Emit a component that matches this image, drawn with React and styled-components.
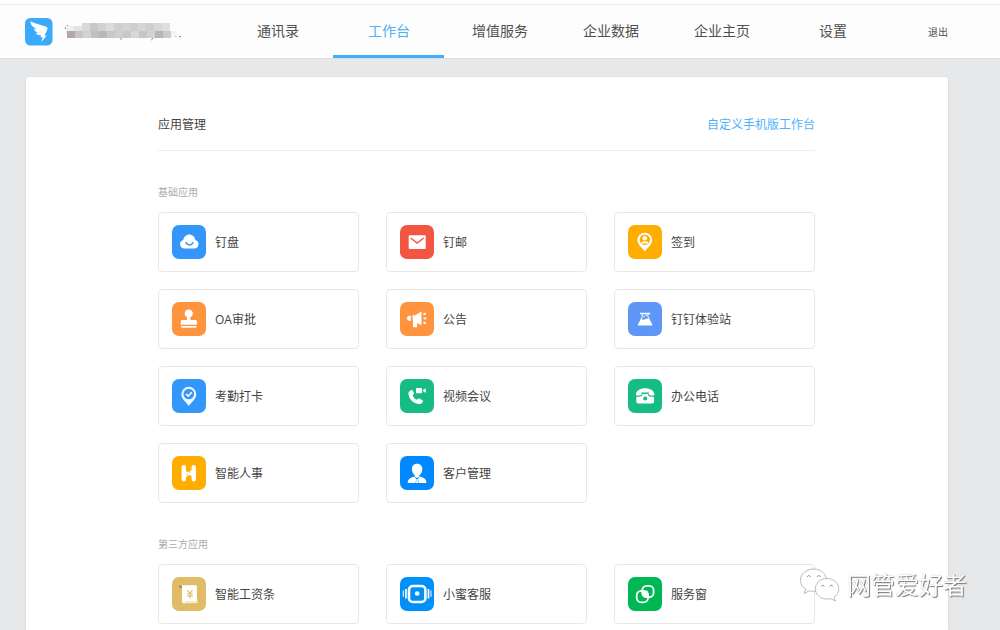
import React, { useState } from "react";
import styled, { createGlobalStyle } from "styled-components";

const GlobalStyle = createGlobalStyle`
  * {
    box-sizing: border-box;
  }

  body {
    margin: 0;
    background: #e7e8ea;
    color: #444;
    font-family: "Open Sans", "Noto Sans CJK SC", sans-serif;
    font-size: 12px;
    line-height: 18px;
  }
`;

const Page = styled.div`
  display: flex;
  flex-direction: column;
  min-height: 100vh;
`;

const Header = styled.header`
  display: flex;
  align-items: stretch;
  height: 59px;
  padding: 0 52px 0 25px;
  background: #fdfdfd;
  border-top: 4px solid #fff;
  border-bottom: 1px solid #dfe0e2;
  box-shadow: inset 0 1px 0 #ececec;
`;

const Brand = styled.div`
  display: flex;
  align-items: center;
  gap: 12px;
  flex: 0 0 197px;
  padding-top: 2px;
`;

const Nav = styled.nav`
  display: flex;
  flex: 1;
`;

const Tab = styled.a`
  display: flex;
  align-items: center;
  justify-content: center;
  flex: 0 1 111px;
  padding: 3px 0 0 1px;
  border-bottom: 3px solid ${(props) => (props.$active ? "#40adfb" : "transparent")};
  color: ${(props) => (props.$active ? "#4fb1fa" : "#505050")};
  font-size: 14px;
  text-decoration: none;
`;

const Logout = styled.button`
  padding: 2px 0 0;
  border: 0;
  background: none;
  color: #505050;
  font: inherit;
  font-size: 10px;
  cursor: pointer;
`;

const Panel = styled.main`
  flex: 1;
  margin: 18px 52px 0 26px;
  padding: 0 133px 0 132px;
  background: #fff;
  border-radius: 3px 3px 0 0;
  box-shadow: 0 0 2px rgba(0, 0, 0, 0.12);
`;

const PanelHead = styled.div`
  display: flex;
  align-items: flex-end;
  justify-content: space-between;
  height: 74px;
  padding-bottom: 16px;
  border-bottom: 1px solid #eee;
`;

const Title = styled.h1`
  margin: 0;
  font-size: 12px;
  font-weight: 400;
`;

const CustomLink = styled.a`
  color: #4fb1fa;
  text-decoration: none;
`;

const Section = styled.section`
  padding-top: 32px;
`;

const SectionTitle = styled.h2`
  margin: 0 0 11px;
  color: #aaa;
  font-size: 10px;
  font-weight: 400;
`;

const Grid = styled.div`
  display: grid;
  grid-template-columns: repeat(3, 1fr);
  gap: 17px 27px;
`;

const Card = styled.button`
  display: flex;
  align-items: center;
  gap: 9px;
  height: 60px;
  padding: 0 13px;
  border: 1px solid #e8e8e8;
  border-radius: 4px;
  background: #fff;
  color: #444;
  font: inherit;
  cursor: pointer;
`;

const AppName = styled.span`
  padding-top: 2px;
`;

const Tile = styled.svg`
  flex: none;
  width: 34px;
  height: 34px;
  border-radius: 7px;
  background: ${(props) => props.$color};
`;

const Watermark = styled.div`
  position: fixed;
  right: 33px;
  bottom: 26px;
  display: flex;
  align-items: center;
  gap: 6px;
  color: #fff;
  font-size: 24px;
  line-height: 36px;
  text-shadow: 1px 1px 1px #777, 0 0 1px #aaa;
  pointer-events: none;
`;

const icons = {
  disk: (c) => (
    <>
      <path
        d="M12.4 23.6a4.4 4.4 0 0 1-1.2-8.6c.7-3.2 3.2-5.5 6.1-5.5s5.4 2.3 6.1 5.5a4.4 4.4 0 0 1-1.2 8.6z"
        fill="#fff"
      />
      <path d="M14 17.6c1.6 3.1 5.4 3.1 7 0" fill="none" stroke={c} strokeWidth="1.5" strokeLinecap="round" />
    </>
  ),
  mail: (c) => (
    <>
      <rect x="8.7" y="10.2" width="17" height="13.8" rx="0.8" fill="#fff" />
      <path d="M10.7 13l6.5 5 6.5-5" fill="none" stroke={c} strokeWidth="1.4" />
    </>
  ),
  checkin: (c) => (
    <>
      <path d="M16.8 26.6c-2-3.2-7.4-6.7-7.4-11.5a7.4 7.4 0 0 1 14.8 0c0 4.8-5.4 8.3-7.4 11.5z" fill="#fff" />
      <circle cx="16.8" cy="14.7" r="5.2" fill={c} />
      <circle cx="16.8" cy="13.2" r="2.2" fill="#fff" />
      <path d="M12.8 18.6c.6-3.2 7.4-3.2 8 0z" fill="#fff" />
    </>
  ),
  stamp: () => (
    <path
      d="M16.7 7.5a4 4 0 0 0-2.1 7.4c.7.6.8 2 .2 3.1h-4.6c-1 0-1.5.6-1.5 1.5v3.3h16.2v-3.3c0-.9-.6-1.5-1.5-1.5h-4.7c-.6-1.1-.5-2.5.2-3.1a4 4 0 0 0-2.2-7.4zM9.2 24h15.2v.7c0 .7-.4 1.1-1 1.1H10.2c-.6 0-1-.4-1-1.1z"
      fill="#fff"
    />
  ),
  notice: () => (
    <>
      <path d="M12.4 13.5l3-.3 6.1-3.9v14l-4.3-2.4v3.7c0 .4-.3.7-.7.7h-2.8c-.4 0-.7-.3-.7-.7v-4.2z" fill="#fff" />
      <path d="M10.8 13.6v5.4c-2.4.1-3.8-.9-3.8-2.7s1.4-2.7 3.8-2.7z" fill="#fff" />
      <path d="M23.4 12.3l2.5-1M23.6 16.4h2.8M23.4 20.4l2.5 1" stroke="#fff" strokeWidth="1.8" />
    </>
  ),
  lab: () => (
    <>
      <path d="M12 11.5h10.2" stroke="#fff" strokeWidth="1.3" />
      <path d="M14.3 11.5v3L11 22.3h12.2l-3.3-7.8v-3" fill="none" stroke="#fff" strokeWidth="1" />
      <path d="M12.8 17.2l3.2.6 2.6-1.3 2.8.7 2.8 5.2c.3.6 0 1.2-.7 1.2H10.7c-.7 0-1-.6-.7-1.2z" fill="#fff" />
      <path d="M16 13.5v2M18.2 12.5V14" stroke="#fff" strokeWidth="1" />
    </>
  ),
  attendance: (c) => (
    <>
      <path d="M16.8 27c-2-3.4-7.5-7-7.5-11.8a7.5 7.5 0 0 1 15 0c0 4.8-5.5 8.4-7.5 11.8z" fill="#f1f7ff" />
      <circle cx="16.8" cy="15" r="5.3" fill={c} />
      <path d="M14 15l2.2 2.1 3.6-3.9" fill="none" stroke="#fff" strokeWidth="1.5" />
    </>
  ),
  video: () => (
    <>
      <path
        d="M9.2 12.4l2-1.3c.6-.3 1.2-.1 1.5.4l1.2 2.4c.3.5.1 1-.3 1.4l-1 .9c.7 2 2.3 3.6 4.2 4.5l1.1-.9c.4-.4.9-.4 1.400-.2l3.1 1.7c.6.3.8.9.5 1.4-.9 1.7-2.5 2.500-4.6 2.300-5.1-.6-9.6-5.2-9.900-10.200-.1-1 .2-1.800.8-2.400z"
        fill="#fff"
      />
      <rect x="16" y="9" width="6" height="5.2" rx="0.8" fill="#fff" />
      <path d="M22.6 11.5l3.200-2.200v4.700l-3.200-2.200z" fill="#fff" />
    </>
  ),
  phone: (c) => (
    <>
      <path
        d="M8 15.6c0-4 4.4-6.4 9.2-6.4s9.2 2.4 9.2 6.4c0 .9-.5 1.2-1.2 1.100l-3.200-.4c-.8-.1-1.200-.6-1.200-1.300v-1.400h-7.200V15c0 .7-.4 1.200-1.200 1.300l-3.200.4c-.7.100-1.200-.2-1.200-1.100z"
        fill="#fff"
      />
      <path
        d="M8.300 18l4.500-.6c1-.2 1.500-.8 1.600-2.400h5.600c.1 1.600.6 2.200 1.600 2.400l4.500.6v4.200c0 1.300-.7 2.200-2 2.200H10.300c-1.300 0-2-.9-2-2.200z"
        fill="#fff"
      />
      <circle cx="17.2" cy="19.5" r="2" fill={c} />
    </>
  ),
  hr: (c) => (
    <>
      <path d="M11.8 11.2v12M21.700 11.200v12" stroke="#fff" strokeWidth="4.4" strokeLinecap="round" />
      <path d="M12.8 14.5c1.800 1.500 3 1.800 4.300 1.100.4-.8 1.200-1.200 2.400-1.200h1.200v6.200c-1.600-1.400-3-1.700-4.200-1-.5.700-1.200 1.100-2.400 1.100h-1.300z" fill="#fff" />
      <path d="M17.3 14.8c.9.9.8 1.600.1 2.100M16 20.200c-.9-.9-.8-1.600-.1-2.100" fill="none" stroke={c} strokeWidth="1" />
    </>
  ),
  customer: () => (
    <>
      <path d="M17.1 7.8c3.200 0 5.200 2.100 5.200 5.100 0 2.700-1.300 5.200-3 6.400v1.400l-2.200 1.300-2.200-1.300v-1.400c-1.700-1.200-3-3.700-3-6.400 0-3 2-5.100 5.200-5.100z" fill="#fff" />
      <path d="M14.2 20.5l2 2.200-.6 4.300H7.700c.1-3.600 2.600-5.600 6.500-6.500zM20 20.500c3.900.9 6.400 2.900 6.500 6.500h-7.900l-.6-4.300z" fill="#fff" />
      <path d="M16.500 23h1.200l.5 4H16z" fill="#fff" />
    </>
  ),
  payroll: (c) => (
    <>
      <path d="M6.800 8.400h3.400v2.500H8.700c-1 0-1.700-1-1.900-2.500z" fill="#ab8734" />
      <path d="M9.200 8.200h14.500c.7 0 1.200.5 1.200 1.200v15H14c-.4 1.200-1.200 1.800-2.300 1.800-1 0-1.700-.8-1.700-1.900V10.200c0-.8-.2-1.500-.8-2z" fill="#fff" />
      <path d="M14 24.200h12.400c0 1.200-.8 2-2 2H12c1.200 0 1.900-.7 2-2z" fill="#f6edc9" />
      <path d="M15.400 13.200l2.600 3 2.600-3M18 16.200v5M15.200 16.700h5.600M15.200 18.900h5.600" fill="none" stroke={c} strokeWidth="1.1" />
    </>
  ),
  bot: () => (
    <>
      <rect x="9" y="9" width="16.4" height="16" rx="3.8" fill="none" stroke="#fff" strokeWidth="2.6" />
      <circle cx="17.2" cy="16.5" r="2.3" fill="#fff" />
      <path d="M5.900 12v9.500M28.500 12v9.500" stroke="#fff" strokeWidth="1.7" />
      <path d="M3.300 13.500v6.300M31 13.500v6.300" stroke="#d4ecff" strokeWidth="1.2" />
    </>
  ),
  service: () => (
    <g stroke="#fff" strokeWidth="1.8">
      <path d="M14.700 13.700h4.500c.8 1 1.200 2 1.200 3.300v3.600h-3.200c-1.700 0-2.800-1.100-2.800-2.800z" fill="#fff" stroke="none" />
      <rect x="14.2" y="8.8" width="11.4" height="11.4" rx="4.5" fill="none" />
      <rect x="8.7" y="13.9" width="11.4" height="11.4" rx="4.5" fill="none" />
    </g>
  ),
};

const sections = [
  {
    title: "基础应用",
    apps: [
      { name: "钉盘", icon: "disk", color: "#3296fa" },
      { name: "钉邮", icon: "mail", color: "#f25643" },
      { name: "签到", icon: "checkin", color: "#ffad00" },
      { name: "OA审批", icon: "stamp", color: "#ff943e" },
      { name: "公告", icon: "notice", color: "#ff943e" },
      { name: "钉钉体验站", icon: "lab", color: "#5e97f6" },
      { name: "考勤打卡", icon: "attendance", color: "#3296fa" },
      { name: "视频会议", icon: "video", color: "#15bc83" },
      { name: "办公电话", icon: "phone", color: "#15bc83" },
      { name: "智能人事", icon: "hr", color: "#ffad00" },
      { name: "客户管理", icon: "customer", color: "#0089ff" },
    ],
  },
  {
    title: "第三方应用",
    apps: [
      { name: "智能工资条", icon: "payroll", color: "#e0bc69" },
      { name: "小蜜客服", icon: "bot", color: "#0090f8" },
      { name: "服务窗", icon: "service", color: "#00b853" },
    ],
  },
];

const tabs = ["通讯录", "工作台", "增值服务", "企业数据", "企业主页", "设置"];

// company name is masked, one colour per block
const maskTop = ["#f0eef0", "#e3e3e4", "#d9d9d9", "#c8c7c8", "#d2d2d3", "#dcdcdc", "#cfcfcf", "#d3d3d3", "#cdcdce", "#d6d6d7", "#cecece", "#d8d8d9", "#dedfe2"];
const maskBottom = ["#b1a8af", "#c7c3c6", "#d2d2d3", "#c0bfc1", "#b5b8bc", "#c8c8c9", "#d0cfd0", "#c8c8c8", "#d7d7d7", "#c8c5c8", "#d2d2d2", "#b8b5b8", "#c8cbcd"];

const Logo = () => (
  <svg width="28" height="28" viewBox="0 0 28 28" aria-label="logo">
    <rect width="27.5" height="27.5" rx="5.5" fill="#3aabfc" />
    <path
      d="M5.300 3.300c4 2.300 10.200 3.400 15.300 5.100 1.500.5 2.100 1.300 1.800 2.600-.4 2-1.700 4.200-3 6.400h2.300L16.500 24l1.100-4.700h-2.100l.7-2.200c-2.200.5-4.300-.1-5.500-2l3.200-.1c-2.600-.7-4.400-2.100-5-4.300l3.500.8C8.800 9.800 5.400 7.500 5.300 3.300z"
      fill="#fff"
    />
  </svg>
);

const CompanyName = () => (
  <svg width="118" height="20" viewBox="0 0 118 20">
    <path d="M0 7l2.500-4M4 4.500l3 1" stroke="#777" strokeWidth="1" />
    <path d="M55 15c.4 1.500 1 2.400 2 3M88 15c-.3 1.500-.8 2.400-1.600 3" fill="none" stroke="#777" />
    {maskTop.map((color, i) => (
      <rect key={i} x={i * 8 + 1} y={i < 2 ? 4 : 1} width="8" height="8" fill={color} />
    ))}
    {maskBottom.map((color, i) => (
      <rect key={i} x={i * 8 + 2} y="9" width="8" height="7" fill={color} />
    ))}
    <rect x="106" y="9" width="6" height="6" fill="#f2f4f6" />
    <circle cx="111" cy="14.5" r="0.7" fill="#8cc6ef" />
    <circle cx="115" cy="14.5" r="0.8" fill="#666" />
  </svg>
);

const WechatMark = () => (
  <svg width="42" height="38" viewBox="0 0 42 38">
    <g fill="#fff" stroke="#aaa" strokeWidth="0.8">
      <path d="M14.500 3C7.300 3 1.500 8 1.500 14.300c0 3.600 2 6.700 5.200 8.700l-1.500 4.500 5.200-2.700c1.300.4 2.700.6 4.100.6 7.200 0 13-5 13-11.200S21.700 3 14.500 3z" />
      <path d="M28 12.500c-6.500 0-11.700 4.600-11.700 10.300S21.500 33.100 28 33.100c1.300 0 2.600-.2 3.800-.5l4.600 2.400-1.200-3.900c2.800-1.900 4.500-4.900 4.500-8.300 0-5.700-5.200-10.300-11.700-10.300z" />
    </g>
    <g fill="none" stroke="#888" strokeWidth="1">
      <path d="M8.300 11c.5-2 2.500-2 3 0M18.300 11c.5-2 2.500-2 3 0M22.500 20.500c.4-1.700 2.200-1.700 2.600 0M31 20.500c.4-1.700 2.200-1.700 2.600 0" />
    </g>
  </svg>
);

const App = () => {
  const [active, setActive] = useState("工作台");

  return (
    <Page>
      <GlobalStyle />
      <Header>
        <Brand>
          <Logo />
          <CompanyName />
        </Brand>
        <Nav>
          {tabs.map((tab) => (
            <Tab key={tab} href="#" $active={tab === active} onClick={() => setActive(tab)}>
              {tab}
            </Tab>
          ))}
        </Nav>
        <Logout>退出</Logout>
      </Header>
      <Panel>
        <PanelHead>
          <Title>应用管理</Title>
          <CustomLink href="#">自定义手机版工作台</CustomLink>
        </PanelHead>
        {sections.map((section) => (
          <Section key={section.title}>
            <SectionTitle>{section.title}</SectionTitle>
            <Grid>
              {section.apps.map((app) => (
                <Card key={app.name}>
                  <Tile viewBox="0 0 34 34" $color={app.color}>
                    {icons[app.icon](app.color)}
                  </Tile>
                  <AppName>{app.name}</AppName>
                </Card>
              ))}
            </Grid>
          </Section>
        ))}
      </Panel>
      <Watermark>
        <WechatMark />
        网管爱好者
      </Watermark>
    </Page>
  );
};

export default App;
